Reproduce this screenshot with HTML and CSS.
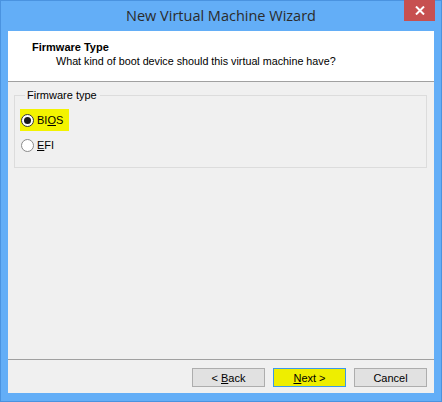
FILE: index.html
```html
<!DOCTYPE html>
<html lang="en">
<head>
    <meta charset="UTF-8">
    <title>New Virtual Machine Wizard</title>
    <link rel="stylesheet" href="styles.css">
</head>
<body>
    <div class="window">
        <div class="titlebar">
            <span class="title">New Virtual Machine Wizard</span>
            <button class="close">
                <svg width="10" height="9" viewBox="0 0 10 9"><path d="M1 0.5 L9 8.5 M9 0.5 L1 8.5" stroke="#fff" stroke-width="2"/></svg>
            </button>
        </div>

        <div class="client">
            <div class="header">
                <h1>Firmware Type</h1>
                <p>What kind of boot device should this virtual machine have?</p>
            </div>

            <div class="content">
                <fieldset class="group">
                    <legend>Firmware type</legend>
                    <label class="radio checked"><span class="dot"></span><span>BI<u>O</u>S</span></label>
                    <label class="radio"><span class="dot"></span><span><u>E</u>FI</span></label>
                </fieldset>
            </div>

            <div class="footer">
                <button class="btn">&lt; <u>B</u>ack</button>
                <button class="btn primary"><u>N</u>ext &gt;</button>
                <button class="btn">Cancel</button>
            </div>
        </div>
    </div>
</body>
</html>
```

FILE: styles.css
```css
body {
    margin: 0;
    padding: 0;
    font-family: "Liberation Sans", Arial, sans-serif;
    font-size: 11px;
    color: #000;
}
.window {
    width: 442px;
    height: 402px;
    box-sizing: border-box;
    background-color: #63aef7;
    border: 1px solid #4a93e0;
    display: flex;
    flex-direction: column;
}
.titlebar {
    position: relative;
    height: 30px;
    display: flex;
    justify-content: center;
    align-items: center;
}
.title {
    font-family: "Open Sans", "Noto Sans", sans-serif;
    font-size: 14.5px;
    color: #2b2b2b;
    margin-top: -1px;
}
.close {
    position: absolute;
    top: -1px;
    right: 6px;
    width: 31px;
    height: 21px;
    border: none;
    padding: 0;
    background-color: #c75050;
    display: flex;
    justify-content: center;
    align-items: center;
}
.client {
    flex: 1;
    margin: 0 7px 8px 7px;
    background-color: #f0f0f0;
    display: flex;
    flex-direction: column;
}
.header {
    height: 51px;
    background-color: #fff;
    border-bottom: 1px solid #a0a0a0;
    padding: 10px 0 0 24px;
    box-sizing: border-box;
}
.header h1 {
    margin: 0;
    font-size: 11px;
    font-weight: bold;
}
.header p {
    margin: 2px 0 0 24px;
    font-size: 10.75px;
}
.content {
    flex: 1;
    padding: 7px 7px 0 6px;
}
.group {
    margin: 0;
    padding: 8px 0 11px 5px;
    border: 1px solid #dcdcdc;
    display: flex;
    flex-direction: column;
    align-items: flex-start;
    gap: 3px;
}
.group legend {
    padding: 0 3px 0 2px;
    margin-left: 5px;
}
.radio {
    display: flex;
    align-items: center;
    gap: 3px;
    height: 22px;
    padding: 0 6px 0 1px;
}
.radio.checked {
    background-color: #f3f300;
}
.dot {
    width: 11px;
    height: 11px;
    border: 1px solid #333;
    border-radius: 50%;
    background: #fff;
    position: relative;
}
.radio:not(.checked) .dot {
    border-color: #8a8a8a;
}
.radio.checked .dot::after {
    content: "";
    position: absolute;
    left: 2px;
    top: 2px;
    width: 7px;
    height: 7px;
    border-radius: 50%;
    background: #1a1a1a;
}
.footer {
    height: 34px;
    box-sizing: border-box;
    border-top: 1px solid #a0a0a0;
    display: flex;
    justify-content: flex-end;
    align-items: flex-start;
    gap: 8px;
    padding: 8px 7px 0 0;
}
.btn {
    width: 73px;
    height: 19px;
    padding: 0;
    font-family: "Liberation Sans", Arial, sans-serif;
    font-size: 11px;
    color: #000;
    background-color: #e1e1e1;
    border: 1px solid #adadad;
}
.btn.primary {
    background-color: #eeee00;
    border-color: #3c99e8;
}
```
